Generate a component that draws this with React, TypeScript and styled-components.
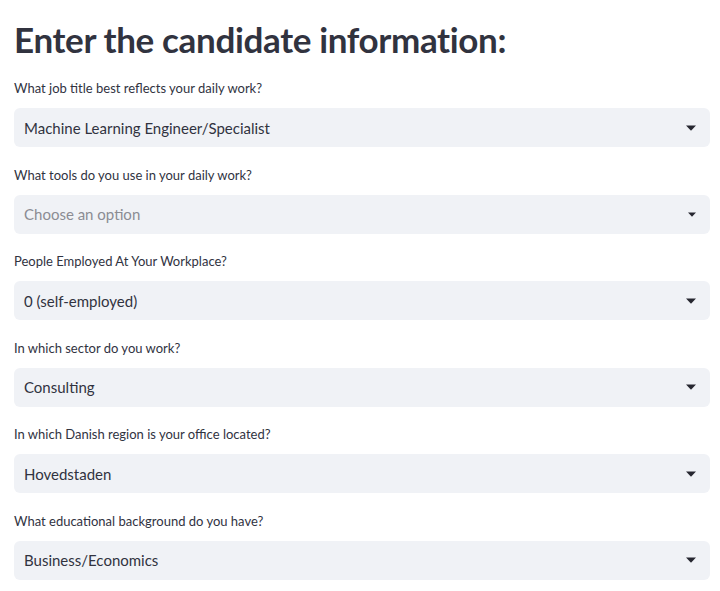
import React from "react";
import styled, { createGlobalStyle } from "styled-components";

const Global = createGlobalStyle`
  html, body { margin: 0; padding: 0; background: #ffffff; }
  body { font-family: "Lato", "Open Sans", sans-serif; color: #31333f; }
`;

const Page = styled.main`
  width: 720px;
  box-sizing: border-box;
  padding: 17px 10px 0 14px;
  display: flex;
  flex-direction: column;
`;

const Title = styled.h1`
  margin: 0 0 17px 0;
  font-family: "Lato", sans-serif;
  font-weight: 700;
  font-size: 35px;
  line-height: 44px;
  color: #31333f;
  letter-spacing: -0.35px;
`;

const Field = styled.div`
  display: flex;
  flex-direction: column;
  gap: 10px;
  margin-bottom: 17.6px;
`;

const Label = styled.label`
  font-size: 13px;
  line-height: 20px;
  color: #31333f;
`;

const Select = styled.div`
  height: 39px;
  box-sizing: border-box;
  background: #f0f2f6;
  border-radius: 6px;
  display: flex;
  align-items: center;
  justify-content: space-between;
  padding: 0 14px 0 10px;
`;

const Value = styled.span<{ $placeholder?: boolean }>`
  font-size: 15px;
  color: ${(p) => (p.$placeholder ? "#8b8c93" : "#31333f")};
`;

const Arrow = ({ small }: { small?: boolean }) => (
  <svg width={small ? 8 : 10} height={small ? 5 : 6} viewBox="0 0 10 6">
    <path d="M0 0.5 L10 0.5 L5 5.8 Z" fill="#262730" />
  </svg>
);

const fields = [
  { label: "What job title best reflects your daily work?", value: "Machine Learning Engineer/Specialist" },
  { label: "What tools do you use in your daily work?", value: "Choose an option", placeholder: true },
  { label: "People Employed At Your Workplace?", value: "0 (self-employed)" },
  { label: "In which sector do you work?", value: "Consulting" },
  { label: "In which Danish region is your office located?", value: "Hovedstaden" },
  { label: "What educational background do you have?", value: "Business/Economics" },
];

export default function App() {
  return (
    <>
      <Global />
      <Page>
        <Title>Enter the candidate information:</Title>
        {fields.map((f) => (
          <Field key={f.label}>
            <Label>{f.label}</Label>
            <Select>
              <Value $placeholder={f.placeholder}>{f.value}</Value>
              <Arrow small={f.placeholder} />
            </Select>
          </Field>
        ))}
      </Page>
    </>
  );
}
